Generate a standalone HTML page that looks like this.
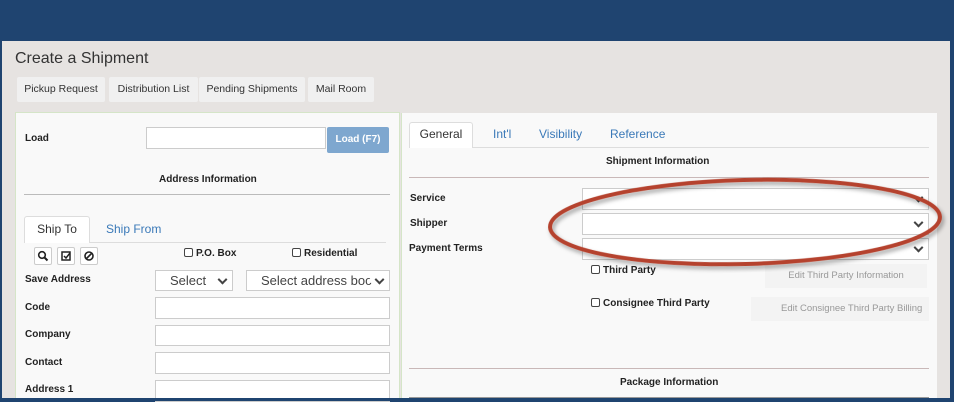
<!DOCTYPE html>
<html><head><style>
*{box-sizing:border-box;margin:0;padding:0}
body{width:954px;height:401px;overflow:hidden;background:#1f4470;font-family:"Liberation Sans",Arial,sans-serif;position:relative}
.a{position:absolute}
.main{left:2px;top:41px;width:948px;height:357px;background:#e6e3e1;overflow:hidden}
.btn{background:#f0f0f0;border-radius:2px;font-size:10.5px;color:#333;height:25px;line-height:25px;text-align:center;top:36px;white-space:nowrap}
.inp{background:#fff;border:1px solid #ccc}
.lbl{font-size:10px;font-weight:bold;color:#222}
.chev{position:absolute;right:6px;top:50%;width:7px;height:7px;border-right:2px solid #444;border-bottom:2px solid #444;transform:translateY(-70%) rotate(45deg)}
.cb{display:inline-block;width:9px;height:9px;border:1px solid #444;border-radius:2px;vertical-align:-1px;margin-right:3px;background:#fff}
.ib{width:18px;height:18px;border:1px solid #ccc;border-radius:2px;background:#fff;top:247px;font-size:11px;text-align:center;line-height:16px;font-weight:bold}
</style></head><body>
<div class="a main">
<div class="a" style="left:13px;top:9px;font-size:16px;color:#333">Create a Shipment</div>
<div class="a btn" style="left:15px;width:88px">Pickup Request</div>
<div class="a btn" style="left:107px;width:89px">Distribution List</div>
<div class="a btn" style="left:197px;width:106px">Pending Shipments</div>
<div class="a btn" style="left:306px;width:66px">Mail Room</div>
</div>
<!-- left panel -->
<div class="a" style="left:15px;top:112px;width:385px;height:286px;background:#f9f9f9;border:1px solid #d5e5c8;border-bottom:none"></div>
<div class="a lbl" style="left:25px;top:133px">Load</div>
<div class="a inp" style="left:146px;top:127px;width:180px;height:22px"></div>
<div class="a" style="left:327px;top:127px;width:62px;height:26px;background:#7ea7cf;border-radius:2px;color:#fff;font-size:10px;font-weight:bold;text-align:center;line-height:26px">Load (F7)</div>
<div class="a lbl" style="left:159px;top:174px">Address Information</div>
<div class="a" style="left:24px;top:194px;width:366px;height:1px;background:#bbb"></div>
<div class="a" style="left:24px;top:242px;width:362px;height:1px;background:#ddd"></div>
<div class="a" style="left:24px;top:216px;width:66px;height:27px;background:#fff;border:1px solid #ddd;border-bottom:none;border-radius:3px 3px 0 0;font-size:12px;color:#333;text-align:center;line-height:24px">Ship To</div>
<div class="a" style="left:106px;top:222px;font-size:12px;color:#3a79b8">Ship From</div>
<div class="a ib" style="left:34px"><svg width="12" height="12" viewBox="0 0 12 12" style="margin-top:2px"><circle cx="5" cy="5" r="3.3" fill="none" stroke="#222" stroke-width="1.6"/><path d="M7.5 7.5L10.5 10.5" stroke="#222" stroke-width="2"/></svg></div>
<div class="a ib" style="left:57px"><svg width="12" height="12" viewBox="0 0 12 12" style="margin-top:2px"><rect x="2" y="2" width="8" height="8" fill="none" stroke="#222" stroke-width="1.5"/><path d="M4 6l2 2 4-5" fill="none" stroke="#222" stroke-width="1.5"/></svg></div>
<div class="a ib" style="left:80px"><svg width="12" height="12" viewBox="0 0 12 12" style="margin-top:2px"><circle cx="6" cy="6" r="4" fill="none" stroke="#222" stroke-width="1.6"/><path d="M3.5 8.5L8.5 3.5" stroke="#222" stroke-width="1.6"/></svg></div>
<div class="a lbl" style="left:184px;top:248px"><span class="cb"></span>P.O. Box</div>
<div class="a lbl" style="left:292px;top:248px"><span class="cb"></span>Residential</div>
<div class="a lbl" style="left:25px;top:274px">Save Address</div>
<div class="a inp" style="left:155px;top:270px;width:78px;height:21px;font-size:13px;color:#444;padding:2px 0 0 14px">Select<span class="chev"></span></div>
<div class="a inp" style="left:246px;top:270px;width:144px;height:21px;font-size:13px;color:#444;padding:2px 0 0 14px;overflow:hidden;white-space:nowrap">Select address boc<span class="chev" style="background:#fff;box-shadow:0 0 0 4px #fff"></span></div>
<div class="a lbl" style="left:25px;top:302px">Code</div>
<div class="a inp" style="left:155px;top:297px;width:235px;height:22px"></div>
<div class="a lbl" style="left:25px;top:329px">Company</div>
<div class="a inp" style="left:155px;top:325px;width:235px;height:21px"></div>
<div class="a lbl" style="left:25px;top:357px">Contact</div>
<div class="a inp" style="left:155px;top:352px;width:235px;height:22px"></div>
<div class="a lbl" style="left:25px;top:384px">Address 1</div>
<div class="a inp" style="left:155px;top:380px;width:235px;height:22px"></div>
<!-- right panel -->
<div class="a" style="left:401px;top:113px;width:536px;height:285px;background:#f9f9f9;border-left:1px solid #d5e5c8"></div>
<div class="a" style="left:409px;top:147px;width:520px;height:1px;background:#ddd"></div>
<div class="a" style="left:409px;top:122px;width:64px;height:26px;background:#fff;border:1px solid #ddd;border-bottom:none;border-radius:3px 3px 0 0;font-size:12px;color:#333;text-align:center;line-height:23px">General</div>
<div class="a" style="left:493px;top:127px;font-size:12px;color:#3a79b8">Int'l</div>
<div class="a" style="left:539px;top:127px;font-size:12px;color:#3a79b8">Visibility</div>
<div class="a" style="left:610px;top:127px;font-size:12px;color:#3a79b8">Reference</div>
<div class="a lbl" style="left:606px;top:156px">Shipment Information</div>
<div class="a" style="left:409px;top:177px;width:520px;height:1px;background:#c9b8b8"></div>
<div class="a lbl" style="left:410px;top:193px">Service</div>
<div class="a inp" style="left:582px;top:188px;width:347px;height:22px"><span class="chev"></span></div>
<div class="a lbl" style="left:410px;top:218px">Shipper</div>
<div class="a inp" style="left:582px;top:213px;width:347px;height:22px"><span class="chev"></span></div>
<div class="a lbl" style="left:409px;top:243px">Payment Terms</div>
<div class="a inp" style="left:582px;top:238px;width:347px;height:22px"><span class="chev"></span></div>
<div class="a lbl" style="left:591px;top:265px"><span class="cb"></span>Third Party</div>
<div class="a" style="left:765px;top:264px;width:162px;height:24px;background:#f3f3f3;font-size:9.5px;color:#999;text-align:center;line-height:24px">Edit Third Party Information</div>
<div class="a lbl" style="left:591px;top:298px"><span class="cb"></span>Consignee Third Party</div>
<div class="a" style="left:751px;top:297px;width:178px;height:24px;background:#f3f3f3;font-size:9.5px;color:#999;line-height:24px;padding-left:30px;white-space:nowrap;overflow:hidden">Edit Consignee Third Party Billing</div>
<div class="a" style="left:409px;top:368px;width:520px;height:1px;background:#c9b8b8"></div>
<div class="a lbl" style="left:620px;top:377px">Package Information</div>
<div class="a" style="left:409px;top:397px;width:520px;height:1px;background:#999"></div>
<svg class="a" style="left:0;top:0" width="954" height="401"><defs><filter id="s"><feDropShadow dx="2" dy="3" stdDeviation="2" flood-opacity="0.35"/></filter></defs>
<ellipse cx="745" cy="222" rx="195" ry="42" transform="rotate(-1.5 745 222)" fill="none" stroke="#b5432f" stroke-width="4" filter="url(#s)"/></svg>
<div class="a" style="left:0;top:398px;width:954px;height:3px;background:#1f4470"></div>
</body></html>
